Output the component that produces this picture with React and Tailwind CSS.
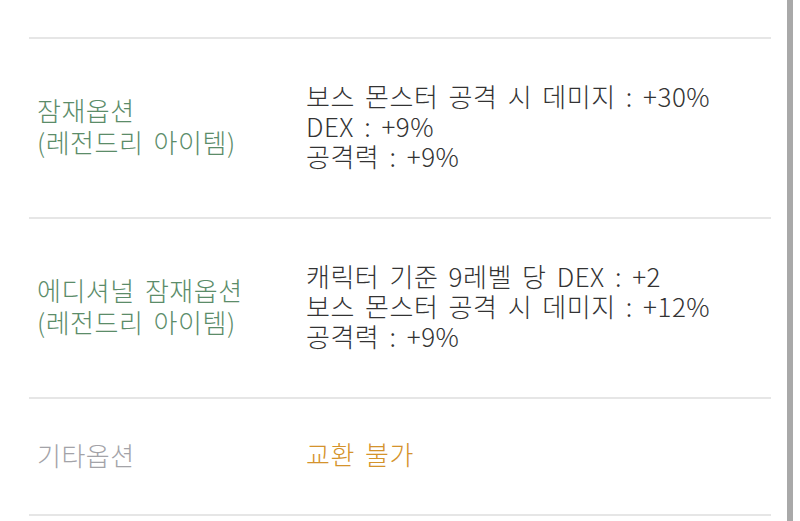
import React from 'react';

const rows = [
  {
    label: ['잠재옵션', '(레전드리 아이템)'],
    labelColor: 'text-[#5b8c69]',
    lines: ['보스 몬스터 공격 시 데미지 : +30%', 'DEX : +9%', '공격력 : +9%'],
    valueColor: 'text-[#333333]',
    height: 'h-[180px]',
  },
  {
    label: ['에디셔널 잠재옵션', '(레전드리 아이템)'],
    labelColor: 'text-[#5b8c69]',
    lines: ['캐릭터 기준 9레벨 당 DEX : +2', '보스 몬스터 공격 시 데미지 : +12%', '공격력 : +9%'],
    valueColor: 'text-[#333333]',
    height: 'h-[180px]',
  },
  {
    label: ['기타옵션'],
    labelColor: 'text-[#a3a3a8]',
    lines: ['교환 불가'],
    valueColor: 'text-[#d4932c]',
    height: 'h-[119px]',
  },
];

const App = () => {
  return (
    <div
      className="flex h-[521px] w-[800px] overflow-hidden bg-white"
      style={{ fontFamily: '"Noto Sans CJK KR", "Noto Sans", sans-serif' }}
    >
      <div className="w-[787px] pl-[29px] pt-[37px]">
        <div className="w-[742px]">
          {rows.map((row, i) => (
            <div
              key={i}
              className={`flex items-center border-t-2 border-[#e6e6e6] ${row.height} ${i === rows.length - 1 ? 'border-b-2' : ''}`}
            >
              <div className={`mb-[4px] w-[277px] pl-2 text-[26px] font-light leading-[32px] tracking-[0.5px] [word-spacing:4px] ${row.labelColor}`}>
                {row.label.map((l, j) => (
                  <div key={j} className="whitespace-nowrap">{l}</div>
                ))}
              </div>
              <div className={`mb-[5px] text-[26px] font-light leading-[30px] tracking-[0.5px] [word-spacing:4px] ${row.valueColor}`}>
                {row.lines.map((l, j) => (
                  <div key={j} className="whitespace-nowrap">{l}</div>
                ))}
              </div>
            </div>
          ))}
        </div>
      </div>
      <div className="h-full w-[6px] bg-[#a9a9a9]" />
    </div>
  );
};

export default App;
